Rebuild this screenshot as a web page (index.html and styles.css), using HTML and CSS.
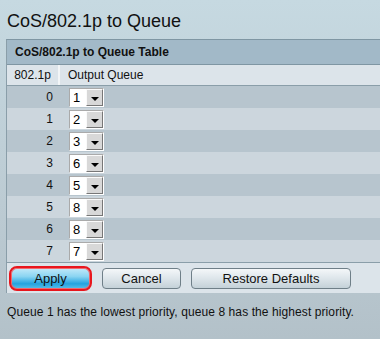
FILE: index.html
```html
<!DOCTYPE html>
<html lang="en">
<head>
  <meta charset="UTF-8" />
  <title>CoS/802.1p to Queue</title>
  <link rel="stylesheet" href="styles.css">
</head>
<body>
  <h1>CoS/802.1p to Queue</h1>

  <div class="queue-table">
    <div class="table-title">CoS/802.1p to Queue Table</div>
    <div class="col-header">
      <div class="col-cos">802.1p</div>
      <div class="col-queue">Output Queue</div>
    </div>

    <div class="row dark">
      <div class="col-cos">0</div>
      <div class="col-queue"><span class="select"><span class="val">1</span><span class="arrow"></span></span></div>
    </div>
    <div class="row">
      <div class="col-cos">1</div>
      <div class="col-queue"><span class="select"><span class="val">2</span><span class="arrow"></span></span></div>
    </div>
    <div class="row dark">
      <div class="col-cos">2</div>
      <div class="col-queue"><span class="select"><span class="val">3</span><span class="arrow"></span></span></div>
    </div>
    <div class="row">
      <div class="col-cos">3</div>
      <div class="col-queue"><span class="select"><span class="val">6</span><span class="arrow"></span></span></div>
    </div>
    <div class="row dark">
      <div class="col-cos">4</div>
      <div class="col-queue"><span class="select"><span class="val">5</span><span class="arrow"></span></span></div>
    </div>
    <div class="row">
      <div class="col-cos">5</div>
      <div class="col-queue"><span class="select"><span class="val">8</span><span class="arrow"></span></span></div>
    </div>
    <div class="row dark">
      <div class="col-cos">6</div>
      <div class="col-queue"><span class="select"><span class="val">8</span><span class="arrow"></span></span></div>
    </div>
    <div class="row">
      <div class="col-cos">7</div>
      <div class="col-queue"><span class="select"><span class="val">7</span><span class="arrow"></span></span></div>
    </div>

    <div class="button-bar">
      <button class="btn btn-apply">Apply</button>
      <button class="btn btn-cancel">Cancel</button>
      <button class="btn btn-restore">Restore Defaults</button>
    </div>
  </div>

  <p class="note">Queue 1 has the lowest priority, queue 8 has the highest priority.</p>
</body>
</html>
```

FILE: styles.css
```css
body {
  font-family: 'Liberation Sans', Arial, sans-serif;
  font-size: 12px;
  color: #111;
  margin: 0;
  padding: 0 0 0 6px;
  background: linear-gradient(180deg, #c6d9e1 0%, #bccbd3 60%, #b3c1c9 100%);
  height: 339px;
  overflow: hidden;
}

h1 {
  font-weight: normal;
  font-size: 18px;
  margin: 0;
  padding: 11px 0 0 1px;
  height: 39px;
  box-sizing: border-box;
  color: #111;
}

.queue-table {
  border-left: 1px solid #8a9ea9;
  border-top: 1px solid #7f96a3;
}

.table-title {
  background: #a2b9c8;
  font-weight: bold;
  height: 24px;
  line-height: 24px;
  padding-left: 8px;
  border-bottom: 1px solid #7f96a3;
}

.col-header,
.row {
  display: flex;
  align-items: center;
}

.col-header {
  background: #dce4ea;
  height: 20px;
  border-bottom: 1px solid #8a9ea9;
}

.col-cos {
  width: 53px;
  box-sizing: border-box;
  text-align: right;
  padding-right: 7px;
}

.col-header .col-cos {
  text-align: center;
  padding-right: 0;
  border-right: 2px solid #f2f5f7;
  height: 20px;
  line-height: 20px;
}

.col-queue {
  padding-left: 9px;
}

.col-header .col-queue {
  padding-left: 8px;
}

.row {
  height: 22px;
  background: #ccd6dd;
}

.row.dark {
  background: #b7c5ce;
}

.select {
  display: flex;
  width: 35px;
  height: 19px;
  box-sizing: border-box;
  background: #fff;
  border: 1px solid #aaa;
  border-right-color: #fff;
  border-bottom-color: #fff;
  margin-top: 1px;
}

.val {
  flex: 1;
  font-size: 13px;
  line-height: 17px;
  padding-left: 3px;
  color: #000;
}

.arrow {
  width: 17px;
  height: 17px;
  box-sizing: border-box;
  background: #d8d8d8;
  border: 1px solid #777;
  border-top-color: #fafafa;
  border-left-color: #fafafa;
  position: relative;
}

.arrow::after {
  content: "";
  position: absolute;
  left: 4px;
  top: 7px;
  border-left: 4px solid transparent;
  border-right: 4px solid transparent;
  border-top: 4px solid #000;
}

.button-bar {
  background: #dce4ea;
  border-top: 1px solid #8a9ea9;
  height: 30px;
  display: flex;
  align-items: center;
  gap: 10px;
  padding-left: 2px;
}

.btn {
  font-family: 'Liberation Sans', Arial, sans-serif;
  font-size: 13px;
  height: 21px;
  border: 1px solid #6f7f88;
  border-radius: 4px;
  background: linear-gradient(180deg, #f4f7f9 0%, #dde5ea 50%, #c4d1d8 100%);
  color: #111;
  padding: 0;
}

.btn-apply {
  width: 83px;
  border: 2px solid #e8161d;
  border-radius: 8px;
  height: 25px;
  background: linear-gradient(180deg, #c4eaf9 0%, #8bd5f2 40%, #24a3df 75%, #5fc0ea 100%);
  box-shadow: inset 0 0 0 1px #f06a6e;
}

.btn-cancel {
  width: 79px;
}

.btn-restore {
  width: 160px;
}

.note {
  margin: 0;
  padding: 12px 0 0 1px;
  font-size: 12px;
  letter-spacing: 0.09px;
}
```
